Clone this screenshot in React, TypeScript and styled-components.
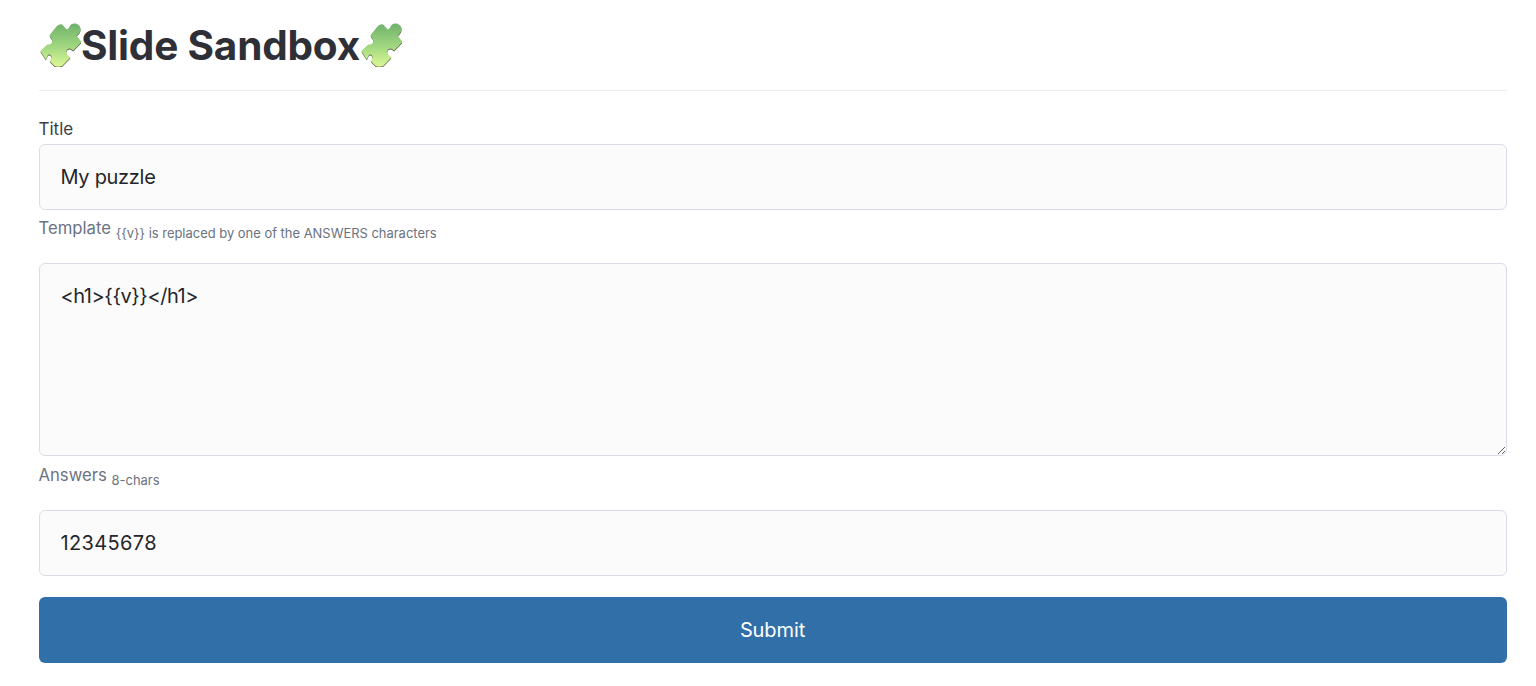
import * as React from 'react';
import styled, { createGlobalStyle } from 'styled-components';

const GlobalStyle = createGlobalStyle`
    html, body {
        margin: 0;
        background: #fff;
        font-family: Inter, "Liberation Sans", sans-serif;
    }
`
const Page = styled.div`
    padding: 0 29.5px 0 38.5px;
`
const Header = styled.h1`
    display: flex;
    align-items: center;
    height: 90px;
    margin: 0;
    border-bottom: 1px solid #ececee;
    font-size: 40.5px;
    font-weight: 700;
    letter-spacing: -0.2px;
    color: #2f3037;
`
const Form = styled.form`
    display: flex;
    flex-direction: column;
    padding-top: 26px;
`
const Label = styled.label<{ $muted?: boolean }>`
    display: block;
    height: ${p => p.$muted ? '53px' : '27px'};
    padding-top: ${p => p.$muted ? '6px' : '0'};
    box-sizing: border-box;
    font-size: ${p => p.$muted ? '16.7px' : '17px'};
    line-height: 24px;
    color: ${p => p.$muted ? '#6b7280' : '#3b3e46'};
`
const Hint = styled.small`
    position: relative;
    top: 4px;
    font-size: 12.95px;
    color: #6b7280;
`
const Field = styled.input<{ $spacing?: number }>`
    display: block;
    width: 100%;
    height: 66px;
    box-sizing: border-box;
    padding: 0 21px;
    border: 1px solid #dcdce8;
    border-radius: 6px;
    background: #fbfbfb;
    font-family: inherit;
    font-size: 20px;
    letter-spacing: ${p => p.$spacing ?? 0}px;
    color: #25262b;
    outline: none;
`
const Area = styled(Field).attrs({ as: 'textarea' })`
    height: 193px;
    margin-bottom: 1px;
    padding: 19px 21px;
    line-height: 26px;
    resize: vertical;
`
const Submit = styled.button`
    display: block;
    width: 100%;
    height: 66px;
    margin-top: 21px;
    border: 0;
    border-radius: 6px;
    background: #316fa8;
    font-family: inherit;
    font-size: 20px;
    letter-spacing: -0.1px;
    color: #fff;
`
const Piece = styled.svg`
    flex: none;
    width: 42.5px;
    height: 44px;
    margin-top: -1px;
`

const PIECE_PATH = 'M1.5 28 L9 21.5 C11.5 22 14 21 14.5 18 C14.5 15.5 12 14.5 11.5 12 L18.5 4 C20.5 2 23 1 25 1.5 L30 6.5 C31 6 32 5.5 32.7 4.5 C33.5 2 35.5 0.5 38.5 0.5 C42 0.5 45 3 45 6 C45 9 43 11 40.5 12.5 L46 19 L37 27.5 C35.5 26.5 34.5 25.5 33 25.5 C31 25.5 29.5 27 29.5 29 C29.5 31.5 32 33 34 34.5 L25 43 C22.5 44 19 44 17 43 L11.5 38 C12.5 36.5 14 35.5 13.5 33.5 C13 32 12 31.5 10.5 31.5 C9 32 8.5 34.5 7.5 36.5 Z'

const PuzzleIcon: React.FC<{ id: string }> = ({ id }) => (
    <Piece viewBox="0 0 46 44" preserveAspectRatio="none">
        <defs>
            <linearGradient id={id} x1="0" y1="0" x2="0" y2="1">
                <stop offset="0" stopColor="#6fb26c" />
                <stop offset="0.55" stopColor="#a3d981" />
                <stop offset="1" stopColor="#dcf795" />
            </linearGradient>
        </defs>
        <path d={PIECE_PATH} fill="#59654d" transform="translate(0 1)" />
        <path d={PIECE_PATH} fill={`url(#${id})`} />
    </Piece>
)

export default function App() {
    return (
        <Page>
            <GlobalStyle />
            <Header>
                <PuzzleIcon id="piece-left" />
                Slide Sandbox
                <PuzzleIcon id="piece-right" />
            </Header>
            <Form onSubmit={e => e.preventDefault()}>
                <Label htmlFor="title">Title</Label>
                <Field id="title" defaultValue="My puzzle" $spacing={-0.3} />
                <Label htmlFor="template" $muted>
                    Template <Hint>{'{{v}}'} is replaced by one of the ANSWERS characters</Hint>
                </Label>
                <Area id="template" defaultValue="<h1>{{v}}</h1>" $spacing={-0.45} />
                <Label htmlFor="answers" $muted>
                    Answers <Hint>8-chars</Hint>
                </Label>
                <Field id="answers" defaultValue="12345678" $spacing={0.35} />
                <Submit type="submit">Submit</Submit>
            </Form>
        </Page>
    )
}
